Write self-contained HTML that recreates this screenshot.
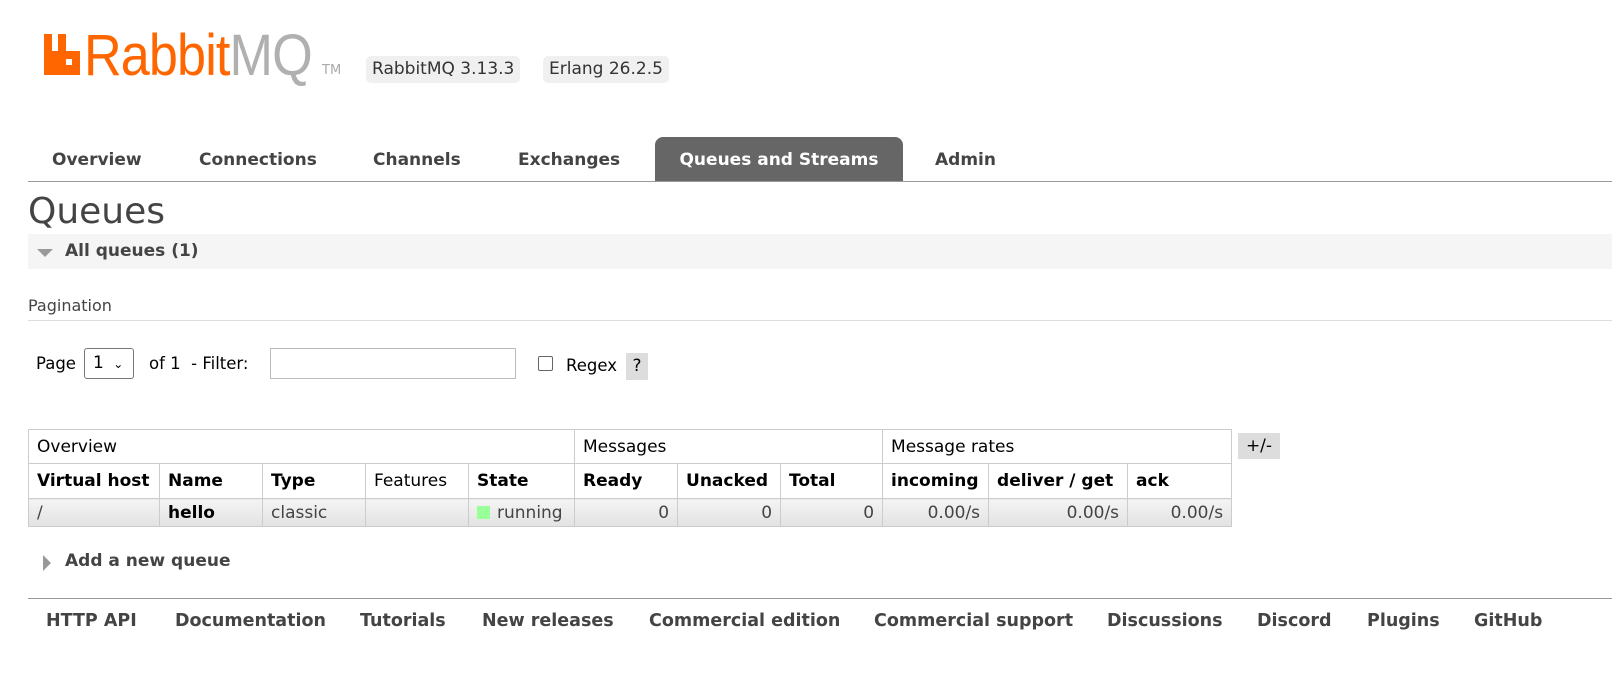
<!DOCTYPE html>
<html><head><meta charset="utf-8"><style>
body{margin:0;width:1612px;height:683px;background:#fff;font-family:"DejaVu Sans","Liberation Sans",sans-serif;color:#484848;position:relative;overflow:hidden;font-size:17px}
.a{position:absolute;white-space:nowrap}
.tab{position:absolute;top:137px;height:45px;line-height:46px;font-weight:bold;font-size:17px;color:#444}
.badge{position:absolute;top:56px;height:27px;line-height:27px;background:#f0f0f0;border-radius:5px;padding:0 6px;font-size:17px;color:#333}
table{position:absolute;left:28px;top:429px;border-collapse:collapse;table-layout:fixed;width:1204px}
td{border:1px solid #ccc;padding:0 8px;white-space:nowrap;overflow:hidden;font-size:17px;color:#000}
tr.h td{height:33px}
tr.c td{height:34px;font-weight:bold}
tr.r td{height:27px;background:linear-gradient(#f4f4f4,#e2e2e2);color:#444}
.n{text-align:right}
.f a{position:absolute;top:611px;font-weight:bold;font-size:17.5px;color:#444;text-decoration:none}
</style></head><body>
<svg class="a" style="left:44px;top:34px" width="36" height="41" viewBox="0 0 36 41"><path d="M0 0h8v17h6V0h8v17h14v24H0z" fill="#f60"/><rect x="22" y="25" width="6" height="6" fill="#fff"/></svg>
<div class="a" style="left:84px;top:22px;font-family:'Liberation Sans',sans-serif;font-size:58px;color:#f60;letter-spacing:-1px;transform:scaleX(0.9);transform-origin:0 0">Rabbit<span style="color:#b0b0b0">MQ</span></div>
<div class="a" style="left:322px;top:63px;font-size:13px;color:#aaa">TM</div>
<div class="badge" style="left:366px">RabbitMQ 3.13.3</div>
<div class="badge" style="left:543px">Erlang 26.2.5</div>
<div class="tab" style="left:52px">Overview</div>
<div class="tab" style="left:199px">Connections</div>
<div class="tab" style="left:373px">Channels</div>
<div class="tab" style="left:518px">Exchanges</div>
<div class="tab" style="left:655px;width:248px;background:#666;color:#fff;text-align:center;border-radius:8px 8px 0 0">Queues and Streams</div>
<div class="tab" style="left:935px">Admin</div>
<div class="a" style="left:28px;top:181px;width:1584px;height:1px;background:#999"></div>
<div class="a" style="left:28px;top:191px;font-size:36px;color:#444">Queues</div>
<div class="a" style="left:28px;top:234px;width:1584px;height:35px;background:#f5f5f5"></div>
<div class="a" style="left:37px;top:249px;width:0;height:0;border-left:8px solid transparent;border-right:8px solid transparent;border-top:8px solid #999"></div>
<div class="a" style="left:65px;top:241px;font-weight:bold;font-size:17px;color:#444">All queues (1)</div>
<div class="a" style="left:28px;top:296px;font-size:16px;color:#444">Pagination</div>
<div class="a" style="left:28px;top:320px;width:1584px;height:1px;background:#ddd"></div>
<div class="a" style="left:36px;top:354px;color:#000;font-size:16.5px">Page</div>
<div class="a" style="left:84px;top:348px;width:50px;height:31px;border:1px solid #767676;border-radius:3px;box-sizing:border-box;color:#000;line-height:29px;padding-left:8px">1 <span style="font-size:12px;margin-left:4px">&#8964;</span></div>
<div class="a" style="left:149px;top:354px;color:#000;font-size:16.5px">of 1 &nbsp;- Filter:</div>
<div class="a" style="left:270px;top:348px;width:246px;height:31px;border:1px solid #bbb;box-sizing:border-box"></div>
<div class="a" style="left:538px;top:356px;width:15px;height:15px;border:1px solid #666;border-radius:2px;box-sizing:border-box"></div>
<div class="a" style="left:566px;top:356px;color:#000;font-size:16.5px">Regex</div>
<div class="a" style="left:626px;top:353px;width:22px;height:27px;background:#ddd;text-align:center;line-height:27px;color:#000">?</div>
<table>
<colgroup><col style="width:131px"><col style="width:103px"><col style="width:103px"><col style="width:103px"><col style="width:106px"><col style="width:103px"><col style="width:103px"><col style="width:102px"><col style="width:106px"><col style="width:139px"><col style="width:104px"></colgroup>
<tr class="h"><td colspan="5">Overview</td><td colspan="3">Messages</td><td colspan="3">Message rates</td></tr>
<tr class="c"><td>Virtual host</td><td>Name</td><td>Type</td><td style="font-weight:normal">Features</td><td>State</td><td>Ready</td><td>Unacked</td><td>Total</td><td>incoming</td><td>deliver / get</td><td>ack</td></tr>
<tr class="r"><td>/</td><td style="font-weight:bold;color:#000">hello</td><td>classic</td><td></td><td><span style="display:inline-block;width:13px;height:13px;background:#9f9;vertical-align:-1px;margin-right:7px"></span>running</td><td class="n">0</td><td class="n">0</td><td class="n">0</td><td class="n">0.00/s</td><td class="n">0.00/s</td><td class="n">0.00/s</td></tr>
</table>
<div class="a" style="left:1238px;top:433px;width:42px;height:26px;background:#ddd;text-align:center;line-height:26px;color:#000">+/-</div>
<div class="a" style="left:43px;top:555px;width:0;height:0;border-top:8px solid transparent;border-bottom:8px solid transparent;border-left:8px solid #999"></div>
<div class="a" style="left:65px;top:551px;font-weight:bold;font-size:17px;color:#444">Add a new queue</div>
<div class="a" style="left:28px;top:598px;width:1584px;height:1px;background:#999"></div>
<div class="f">
<a style="left:46px">HTTP API</a><a style="left:175px">Documentation</a><a style="left:360px">Tutorials</a><a style="left:482px">New releases</a><a style="left:649px">Commercial edition</a><a style="left:874px">Commercial support</a><a style="left:1107px">Discussions</a><a style="left:1257px">Discord</a><a style="left:1367px">Plugins</a><a style="left:1474px">GitHub</a>
</div>
</body></html>
